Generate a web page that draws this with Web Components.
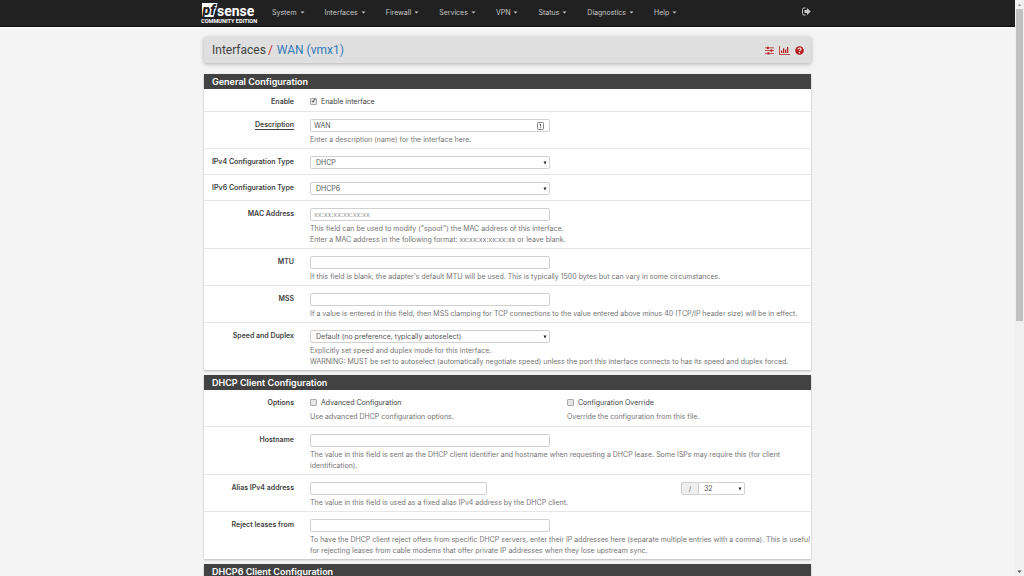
<!DOCTYPE html>
<html lang="en">
<head>
<meta charset="utf-8">
<title>Interfaces: WAN (vmx1)</title>
<style>
html, body { margin: 0; height: 100%; }
body { font: 7px/11px Inter, Roboto, "Liberation Sans", sans-serif; color: #424242; background: #f4f4f4; overflow: hidden; }
</style>
</head>
<body>
<app-shell>
  <nav-bar slot="nav">
    <nav-item>System</nav-item><nav-item>Interfaces</nav-item><nav-item>Firewall</nav-item><nav-item>Services</nav-item><nav-item>VPN</nav-item><nav-item>Status</nav-item><nav-item>Diagnostics</nav-item><nav-item>Help</nav-item>
  </nav-bar>
  <page-title section="Interfaces" page="WAN (vmx1)"></page-title>
  <config-panel heading="General Configuration">
    <form-row label="Enable" type="checks"><check-option label="Enable interface" checked></check-option></form-row>
    <form-row label="Description" type="text" value="WAN" required>Enter a description (name) for the interface here.</form-row>
    <form-row label="IPv4 Configuration Type" type="select" value="DHCP"></form-row>
    <form-row label="IPv6 Configuration Type" type="select" value="DHCP6"></form-row>
    <form-row label="MAC Address" type="text" placeholder="xx:xx:xx:xx:xx:xx">This field can be used to modify ("spoof") the MAC address of this interface.<br>Enter a MAC address in the following format: xx:xx:xx:xx:xx:xx or leave blank.</form-row>
    <form-row label="MTU" type="text">If this field is blank, the adapter's default MTU will be used. This is typically 1500 bytes but can vary in some circumstances.</form-row>
    <form-row label="MSS" type="text">If a value is entered in this field, then MSS clamping for TCP connections to the value entered above minus 40 (TCP/IP header size) will be in effect.</form-row>
    <form-row label="Speed and Duplex" type="select" value="Default (no preference, typically autoselect)">Explicitly set speed and duplex mode for this interface.<br>WARNING: MUST be set to autoselect (automatically negotiate speed) unless the port this interface connects to has its speed and duplex forced.</form-row>
  </config-panel>
  <config-panel heading="DHCP Client Configuration">
    <form-row label="Options" type="checks">
      <check-option label="Advanced Configuration">Use advanced DHCP configuration options.</check-option>
      <check-option label="Configuration Override">Override the configuration from this file.</check-option>
    </form-row>
    <form-row label="Hostname" type="text">The value in this field is sent as the DHCP client identifier and hostname when requesting a DHCP lease. Some ISPs may require this (for client identification).</form-row>
    <form-row label="Alias IPv4 address" type="address" value="32">The value in this field is used as a fixed alias IPv4 address by the DHCP client.</form-row>
    <form-row label="Reject leases from" type="text">To have the DHCP client reject offers from specific DHCP servers, enter their IP addresses here (separate multiple entries with a comma). This is useful for rejecting leases from cable modems that offer private IP addresses when they lose upstream sync.</form-row>
  </config-panel>
  <config-panel heading="DHCP6 Client Configuration"></config-panel>
</app-shell>

<script>
const define = (name, render) => customElements.define(name, class extends HTMLElement {
  connectedCallback() {
    if (!this.shadowRoot) this.attachShadow({ mode: 'open' }).innerHTML = render(this);
  }
});
const attr = (el, name) => el.getAttribute(name) || '';

define('app-shell', () => `
<style>
  :host { display: grid; grid-template-columns: 1fr 9px; height: 100vh; }
  .view { overflow: hidden; }
  main { max-width: 607px; margin: 0 auto; padding-top: 10px; display: flex; flex-direction: column; gap: 5px; }
</style>
<div class="view">
  <slot name="nav"></slot>
  <main><slot></slot></main>
</div>
<scroll-track></scroll-track>`);

define('scroll-track', () => `
<style>
  :host { display: flex; flex-direction: column; background: #f0f0f0; }
  svg { display: block; width: 9px; height: 9px; }
  .track { flex: 1; padding: 0 1px; }
  .thumb { height: 56%; background: #c1c1c1; }
</style>
<svg viewBox="0 0 9 9"><path d="M2.5 6 4.5 3.6 6.500 6z" fill="#a3a3a3"/></svg>
<div class="track"><div class="thumb"></div></div>
<svg viewBox="0 0 9 9"><path d="M2.500 3.500h4L4.500 6z" fill="#505050"/></svg>`);

define('nav-bar', () => `
<style>
  :host { display: block; background: #212121; border-bottom: 1px solid #101010; box-shadow: 0 1px 0 #fff; }
  nav { max-width: 613px; height: 26px; margin: 0 auto; display: flex; align-items: center; }
  .brand { display: block; width: 61px; height: 26px; }
  .brand svg { display: block; }
  .items { display: flex; flex: 1; margin-bottom: 2px; }
  button { border: 0; padding: 0; margin: 0 3px 3px 0; background: none; color: #c8c8c8; }
  button svg { display: block; width: 9px; height: 9px; }
</style>
<nav>
  <a class="brand" href="#" aria-label="pfSense Community Edition">
    <svg width="61" height="26" viewBox="0 0 61 26" font-family="Roboto, sans-serif">
      <path d="M1 3h15.500l-4 14H1z" fill="#fff"/>
      <text x="1.500" y="14.500" font-size="14" font-weight="900" font-style="italic" fill="#212121">p<tspan stroke="#fff" stroke-width="1.200" paint-order="stroke">f</tspan></text>
      <text x="16" y="16" font-size="14" font-weight="700" fill="#fff">sense</text>
      <text x="0" y="23" font-size="5.600" font-weight="700" fill="#fff">COMMUNITY EDITION</text>
    </svg>
  </a>
  <div class="items"><slot></slot></div>
  <button aria-label="Log out"><svg viewBox="0 0 18 18" fill="none" stroke="currentColor" stroke-width="2"><path d="M7 2H4a3 3 0 0 0-3 3v8a3 3 0 0 0 3 3h3"/><path d="M5 6h5V2l7.500 7L10 16v-4H5z" fill="currentColor" stroke="none"/></svg></button>
</nav>`);

define('nav-item', () => `
<style>
  :host { display: block; }
  a { display: flex; align-items: center; gap: 3px; padding: 0 10px; color: #c8c8c8; text-decoration: none; }
  svg { width: 5px; height: 3px; }
</style>
<a href="#"><slot></slot><svg viewBox="0 0 5 3"><path d="M.5.500h4L2.500 2.500z" fill="currentColor"/></svg></a>`);

define('page-title', el => `
<style>
  :host { display: flex; align-items: center; justify-content: space-between; height: 26px; padding: 0 7px 0 8px; margin-bottom: 6px; background: #dfdfdf; border-radius: 2px; box-shadow: 0 1px 4px rgba(0,0,0,.3); }
  h1 { margin: 0; font: 400 12px/16px Roboto, sans-serif; display: flex; gap: 2px; }
  i { color: #c62828; font-style: normal; }
  h1 a { color: #337ab7; text-decoration: none; margin-left: 2px; }
  .tools { display: flex; gap: 5px; }
  .tools a { color: #b71c1c; }
  svg { display: block; height: 9px; }
</style>
<h1><span>${attr(el, 'section')}</span><i>/</i><a href="#">${attr(el, 'page')}</a></h1>
<div class="tools">
  <a href="#" aria-label="Advanced settings"><svg width="9" viewBox="0 0 18 18" fill="currentColor"><path d="M0 3h18v1.500H0zM0 8.500h18V10H0zM0 14h18v1.500H0z"/><path d="M4 1.500h3.500v4.500H4zM11 7h3.500v4.500H11zM5 12.500h3.500V17H5z"/></svg></a>
  <a href="#" aria-label="Status graph"><svg width="11" viewBox="0 0 22 18" fill="currentColor"><path d="M0 0h1.500v16H22v1.500H0zM4 9h2.500v5H4zM8 4.500h2.500V14H8zM12 7h2.500v7H12zM16 2h2.500v12H16z"/></svg></a>
  <a href="#" aria-label="Help"><svg width="9" viewBox="0 0 18 18"><circle cx="9" cy="9" r="8.500" fill="currentColor"/><path d="M6 7c0-4 6-4 6-.6 0 2-3 2-3 4.300" fill="none" stroke="#eee" stroke-width="2.300"/><circle cx="9" cy="13.500" r="1.400" fill="#eee"/></svg></a>
</div>`);

define('config-panel', el => `
<style>
  :host { display: block; background: #fff; box-shadow: 0 1px 2px rgba(0,0,0,.25); }
  h2 { margin: 0; padding: 0 8px; font-size: 9px; line-height: 15px; font-weight: 600; color: #fff; background: #424242; }
  ::slotted(form-row:last-child) { --rule: 0; }
</style>
<h2>${attr(el, 'heading')}</h2>
<slot></slot>`);

const arrow = '<svg class="arrow" viewBox="0 0 8 8"><path d="M1 1h6L4 7z" fill="#222"/></svg>';
const select = (id, value, name) => `<span class="pick"><select id="${id}"${name ? ` aria-label="${name}"` : ''}><option>${value}</option></select>${arrow}</span>`;

define('form-row', el => {
  const type = attr(el, 'type'), value = attr(el, 'value');
  const name = `<span class="name">${attr(el, 'label')}</span>`;
  const badge = '<svg class="badge" viewBox="0 0 14 16"><rect x="1" y="1" width="12" height="14" rx="1.500" fill="#fff" stroke="#777" stroke-width="1.800"/><path d="M7 4v5M7 10.500v1.800M5 4.500h2" stroke="#555" stroke-width="1.800"/></svg>';
  const text = `<span class="pick"><input id="c" type="text" value="${type === 'text' ? value : ''}" placeholder="${attr(el, 'placeholder')}">${el.hasAttribute('required') ? badge : ''}</span>`;
  const control = {
    text: () => `<div class="wide">${text}</div>`,
    select: () => `<div class="wide">${select('c', value)}</div>`,
    address: () => `<div class="address">${text}<div class="mask"><span class="slash">/</span>${select('m', value, 'Prefix length')}</div></div>`
  }[type];
  return `
<style>
  :host { display: grid; grid-template-columns: 90px 1fr; column-gap: 16px; border-bottom: var(--rule, 1px) solid #e6e6e6; }
  .label { padding-top: 7px; text-align: right; font-weight: 600; white-space: nowrap; }
  :host([required]) .name { display: inline-block; line-height: 9px; border-bottom: 1px solid #424242; }
  .body { padding: 7px 0 3px; color: #757575; }
  .wide { width: 48%; margin-bottom: 2px; }
  .checks { display: grid; grid-template-columns: 257px 1fr; padding: 7px 0 4px; }
  .address { display: flex; margin-bottom: 2px; }
  .address > .pick { width: 177px; }
  .mask { display: flex; margin-left: 194px; }
  .mask .pick { width: 47px; }
  .mask select { border-radius: 0 2px 2px 0; }
  .slash { box-sizing: border-box; width: 17px; height: 13px; text-align: center; background: #eee; border: 1px solid #d0d0d0; border-right: 0; border-radius: 2px 0 0 2px; }
  .pick { display: grid; grid-template-columns: minmax(0, 1fr) auto; align-items: center; }
  .pick > * { grid-row: 1; }
  input, select { grid-column: 1 / 3; box-sizing: border-box; width: 100%; height: 13px; margin: 0; padding: 0 3px; border: 1px solid #d0d0d0; border-radius: 2px; background: #fff; color: #555; font: inherit; appearance: none; outline: 0; }
  select { padding: 0 5px; }
  input::placeholder { color: #999; }
  .arrow { grid-column: 2; width: 4px; height: 4px; margin-right: 3px; pointer-events: none; }
  .badge { grid-column: 2; width: 7px; height: 8px; margin-right: 6px; }
</style>
${control ? `<label class="label" for="c">${name}</label><div class="body">${control()}<slot></slot></div>`
          : `<div class="label" id="g">${name}</div><div class="checks" role="group" aria-labelledby="g"><slot></slot></div>`}`;
});

define('check-option', el => `
<style>
  :host { display: block; color: #757575; }
  label { display: flex; align-items: center; gap: 4px; margin-bottom: 3px; color: #424242; }
  input { appearance: none; box-sizing: border-box; width: 7px; height: 7px; margin: 0; border: 1px solid #aaa; border-radius: 1px; background: #e6e6e6; display: grid; }
  input:checked::before { content: "✓"; font: 900 7px/5px "DejaVu Sans", sans-serif; color: #222; }
  :host(:empty) label { margin-bottom: 0; }
</style>
<label><input type="checkbox"${el.hasAttribute('checked') ? ' checked' : ''}>${attr(el, 'label')}</label>
<slot></slot>`);
</script>
</body>
</html>
